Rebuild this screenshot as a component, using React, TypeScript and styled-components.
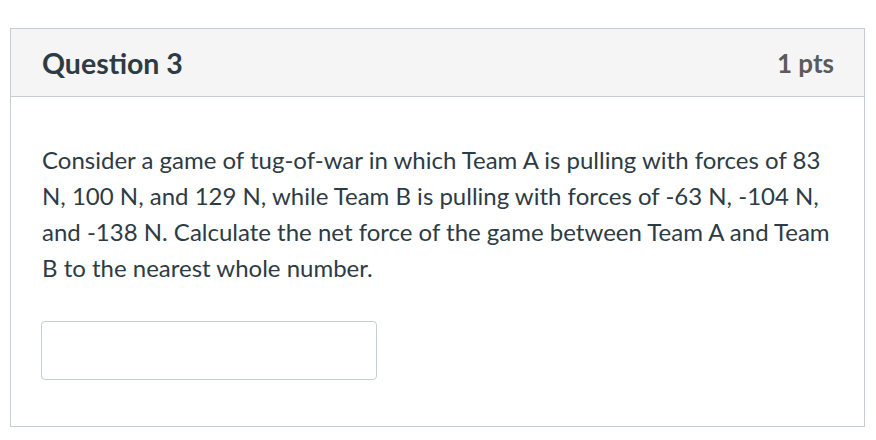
import React from 'react';
import styled, { createGlobalStyle } from 'styled-components';

const GlobalStyle = createGlobalStyle`
  body {
    margin: 0;
    background: #ffffff;
    font-family: Lato, "Open Sans", sans-serif;
  }
`;

const Page = styled.div`
  padding: 28px 12px 0 10px;
`;

const Card = styled.div`
  width: 855px;
  box-sizing: border-box;
  border: 1px solid #c7cdd1;
  background: #fff;
`;

const Header = styled.div`
  display: flex;
  align-items: center;
  justify-content: space-between;
  height: 67px;
  padding: 0 30px 0 31px;
  background: #f5f5f5;
  border-bottom: 1px solid #c7cdd1;
`;

const Title = styled.div`
  font-size: 28.5px;
  font-weight: 700;
  color: #2d3b45;
`;

const Points = styled.div`
  font-size: 26px;
  font-weight: 700;
  color: #5b5b5b;
`;

const Body = styled.div`
  padding: 45px 32px 46px 31px;
`;

const Text = styled.p`
  margin: 0;
  font-size: 24px;
  line-height: 36px;
  color: #2d3b45;
`;

const Answer = styled.input`
  display: block;
  margin: 35px 0 0 -1px;
  width: 336px;
  height: 59px;
  box-sizing: border-box;
  border: 1px solid #c7cdd1;
  border-radius: 4px;
  background: #fff;
`;

export default function App() {
  return (
    <Page>
      <GlobalStyle />
      <Card>
        <Header>
          <Title>Question 3</Title>
          <Points>1 pts</Points>
        </Header>
        <Body>
          <Text>
            Consider a game of tug-of-war in which Team A is pulling with forces of 83 N, 100 N, and 129 N, while
            Team B is pulling with forces of -63 N, -104 N, and -138 N. Calculate the net force of the game between
            Team A and Team B to the nearest whole number.
          </Text>
          <Answer type="text" />
        </Body>
      </Card>
    </Page>
  );
}
